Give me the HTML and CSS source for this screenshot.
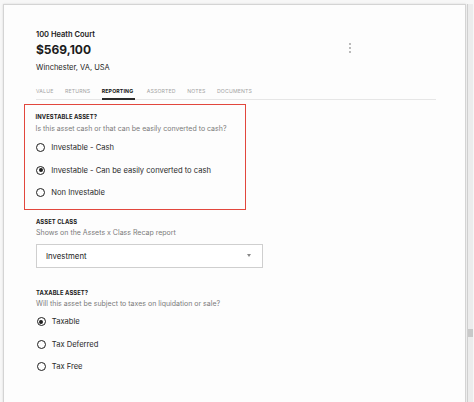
FILE: index.html
```html
<!DOCTYPE html>
<html>
<head>
<meta charset="utf-8">
<link rel="stylesheet" href="styles.css">
</head>
<body>
<div class="page">
  <div class="card">
    <div class="header">
      <div class="head-text">
        <div class="title">100 Heath Court</div>
        <div class="amount">$569,100</div>
        <div class="location">Winchester, VA, USA</div>
      </div>
      <svg class="kebab" width="4" height="12" viewBox="0 0 4 12"><circle cx="2" cy="2" r="0.9"/><circle cx="2" cy="6" r="0.9"/><circle cx="2" cy="10" r="0.9"/></svg>
    </div>
    <div class="tabs">
      <span class="tab">VALUE</span>
      <span class="tab">RETURNS</span>
      <span class="tab active">REPORTING</span>
      <span class="tab">ASSORTED</span>
      <span class="tab">NOTES</span>
      <span class="tab">DOCUMENTS</span>
    </div>

    <div class="section highlight">
      <div class="label">INVESTABLE ASSET?</div>
      <div class="help">Is this asset cash or that can be easily converted to cash?</div>
      <div class="radios">
        <div class="radio"><span class="dot"></span><span>Investable - Cash</span></div>
        <div class="radio checked"><span class="dot"></span><span>Investable - Can be easily converted to cash</span></div>
        <div class="radio"><span class="dot"></span><span>Non Investable</span></div>
      </div>
    </div>

    <div class="section class-section">
      <div class="label">ASSET CLASS</div>
      <div class="help">Shows on the Assets x Class Recap report</div>
      <div class="select"><span>Investment</span><span class="arrow"></span></div>
    </div>

    <div class="section tax-section">
      <div class="label">TAXABLE ASSET?</div>
      <div class="help">Will this asset be subject to taxes on liquidation or sale?</div>
      <div class="radios">
        <div class="radio checked"><span class="dot"></span><span>Taxable</span></div>
        <div class="radio"><span class="dot"></span><span>Tax Deferred</span></div>
        <div class="radio"><span class="dot"></span><span>Tax Free</span></div>
      </div>
    </div>
  </div>
  <div class="scrollbar"><div class="thumb"></div></div>
</div>
</body>
</html>
```
FILE: styles.css
```css
*, *::before, *::after {
  box-sizing: border-box;
}
html, body {
  margin: 0;
  padding: 0;
  height: 100%;
  overflow: hidden;
}
body {
  background: #f7f7f7;
  font-family: Inter, "Liberation Sans", sans-serif;
  color: #1b1b1b;
}
.page {
  display: flex;
  align-items: flex-start;
  padding-top: 4px;
  padding-left: 3px;
}
.card {
  width: 463px;
  height: 430px;
  background: #fdfdfd;
  border: 1px solid #d4d4d4;
  box-shadow: 0 0 2px rgba(0,0,0,0.12);
  padding: 25px 29px 0 32px;
  flex-shrink: 0;
}
.header {
  display: flex;
  justify-content: space-between;
  align-items: flex-start;
  width: 316px;
}
.title {
  font-size: 7.5px;
  line-height: 10px;
  font-weight: 600;
}
.amount {
  font-size: 12px;
  line-height: 16px;
  font-weight: 700;
  margin-top: 2px;
}
.location {
  font-size: 7.5px;
  line-height: 10px;
  margin-top: 5px;
}
.kebab {
  margin-top: 12px;
  fill: #9a9a9a;
}
.tabs {
  display: flex;
  gap: 11.5px;
  width: 400px;
  margin-top: 14px;
  border-bottom: 1px solid #e6e6e6;
}
.tab {
  font-size: 5.2px;
  line-height: 8px;
  letter-spacing: 0.15px;
  color: #a3a3a3;
  padding-bottom: 2.7px;
  margin-bottom: -1px;
  border-bottom: 2px solid transparent;
}
.tab.active {
  color: #161616;
  font-weight: 700;
  border-bottom-color: #2a2a2a;
  padding-right: 2px;
}
.section .label {
  font-size: 5.8px;
  line-height: 8px;
  font-weight: 700;
  letter-spacing: 0.1px;
}
.section .help {
  font-size: 7px;
  line-height: 10px;
  color: #7b7b7b;
  margin-top: 3px;
}
.highlight {
  width: 222px;
  margin-top: 4px;
  margin-left: -12px;
  border: 1.5px solid #e2473d;
  padding: 8.6px 10.5px 5px 10.5px;
}
.radios {
  margin-top: 2.2px;
}
.radio {
  display: flex;
  align-items: center;
  gap: 6px;
  height: 22.5px;
  font-size: 7.6px;
  color: #2a2a2a;
}
.dot {
  width: 9px;
  height: 9px;
  border: 1.3px solid #1e1e1e;
  border-radius: 50%;
  margin-left: 0.8px;
  display: flex;
  align-items: center;
  justify-content: center;
  flex-shrink: 0;
}
.radio.checked .dot::after {
  content: "";
  width: 3.8px;
  height: 3.8px;
  border-radius: 50%;
  background: #1e1e1e;
}
.class-section {
  margin-top: 8px;
}
.class-section .help {
  margin-top: 2px;
}
.select {
  margin-top: 5.8px;
  width: 227px;
  height: 24.4px;
  border: 1px solid #cfcfcf;
  background: #fff;
  display: flex;
  align-items: center;
  justify-content: space-between;
  padding: 0 11px 0 9px;
  font-size: 7.8px;
  color: #222;
}
.arrow {
  width: 0;
  height: 0;
  border-left: 2.2px solid transparent;
  border-right: 2.2px solid transparent;
  border-top: 3px solid #888;
}
.tax-section {
  margin-top: 20.4px;
}
.tax-section .help {
  margin-top: 2.4px;
}
.tax-section .radios {
  margin-top: 1.5px;
}
.scrollbar {
  margin-left: 1px;
  width: 6px;
  height: 400px;
  border-left: 1px solid #cfcfcf;
  background: #ececec;
  position: relative;
  flex-shrink: 0;
}
.thumb {
  position: absolute;
  top: 325px;
  left: 0;
  width: 5px;
  height: 8px;
  background: #c9c9c9;
}
```
